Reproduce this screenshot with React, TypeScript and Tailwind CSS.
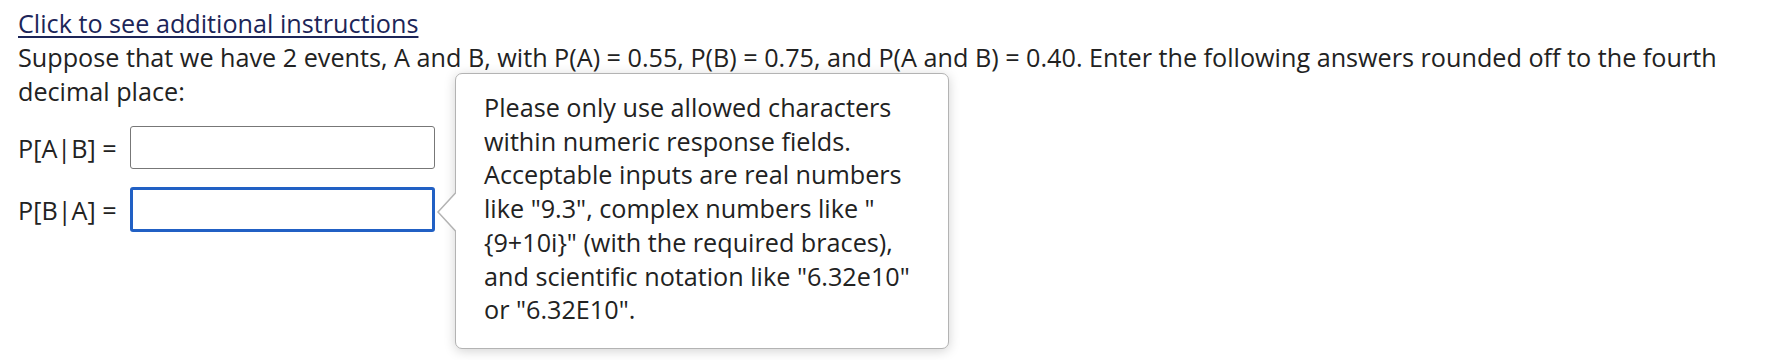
const lines = [
  "Please only use allowed characters",
  "within numeric response fields.",
  "Acceptable inputs are real numbers",
  'like "9.3", complex numbers like "',
  '{9+10i}" (with the required braces),',
  'and scientific notation like "6.32e10"',
  'or "6.32E10".',
];

const Field: React.FC<{ label: string; focused?: boolean }> = ({ label, focused }) => (
  <div className="flex items-center">
    <span className="w-[112px] shrink-0 whitespace-nowrap">{label}</span>
    <input
      className={
        "w-[305px] rounded-[3px] bg-white outline-none " +
        (focused ? "h-[45px] border-[3px] border-[#2160c4]" : "h-[43px] border-[1.5px] border-[#777]")
      }
    />
  </div>
);

export default function App() {
  return (
    <div className="relative w-[1790px] h-[360px] bg-white pl-[18px] pt-[6px] text-[25.2px] leading-[34px] text-[#222] font-['Open_Sans',sans-serif]">
      <a href="#" className="text-[#1c2558] underline underline-offset-[3px]">
        Click to see additional instructions
      </a>
      <p>
        Suppose that we have 2 events, A and B, with P(A) = 0.55, P(B) = 0.75, and P(A and B) = 0.40. Enter
        the following answers rounded off to the fourth
        <br />
        decimal place:
      </p>
      <div className="mt-[18px] flex flex-col gap-[18px]">
        <Field label="P[A|B] =" />
        <Field label="P[B|A] =" focused />
      </div>

      {/* validation popover */}
      <div className="absolute left-[455px] top-[73px] w-[494px] h-[276px] rounded-[7px] border-[1.5px] border-[#b3b3b3] bg-white pl-[28px] pt-[17px] leading-[33.7px] shadow-[0_2px_12px_rgba(0,0,0,0.18)]">
        <svg className="absolute left-[-20px] top-[118px]" width="21" height="40" viewBox="0 0 21 40">
          <polygon points="21,0 2,20 21,40" fill="white" />
          <polyline points="19.5,1 2,20 19.5,39" fill="none" stroke="#b3b3b3" strokeWidth="1.5" />
        </svg>
        {lines.map((l, i) => (
          <div key={i} className="whitespace-pre">
            {l}
          </div>
        ))}
      </div>
    </div>
  );
}
